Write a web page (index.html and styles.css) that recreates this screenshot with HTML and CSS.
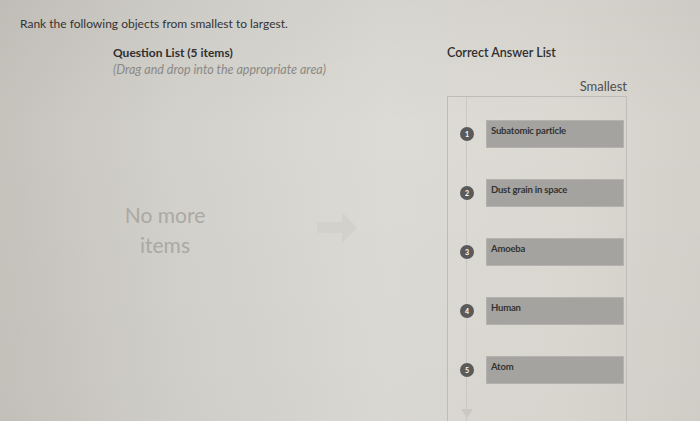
FILE: index.html
```html
<!DOCTYPE html>
<html lang="en">
<head>
<meta charset="utf-8">
<title>Ranking</title>
<link rel="stylesheet" href="styles.css">
</head>
<body>
<main class="page">
  <p class="prompt">Rank the following objects from smallest to largest.</p>
  <div class="columns">
    <section class="source">
      <h2 class="col-title">Question List (5 items)</h2>
      <p class="hint">(Drag and drop into the appropriate area)</p>
      <div class="empty-area">
        <div class="empty-text">No more<br>items</div>
        <svg class="move-arrow" width="40" height="31" viewBox="0 0 40 31" aria-hidden="true">
          <path d="M0 10 H25 V0 L40 15.5 L25 31 V21 H0 Z" fill="#d3d1cb"/>
        </svg>
      </div>
    </section>
    <section class="target">
      <h2 class="col-title">Correct Answer List</h2>
      <div class="end-label">Smallest</div>
      <ol class="track">
        <li class="row"><span class="num">1</span><span class="item">Subatomic particle</span></li>
        <li class="row"><span class="num">2</span><span class="item">Dust grain in space</span></li>
        <li class="row"><span class="num">3</span><span class="item">Amoeba</span></li>
        <li class="row"><span class="num">4</span><span class="item">Human</span></li>
        <li class="row"><span class="num">5</span><span class="item">Atom</span></li>
        <li class="track-end"><span class="down-arrow"></span></li>
      </ol>
    </section>
  </div>
</main>
</body>
</html>
```

FILE: styles.css
```css
html, body {
  margin: 0;
  height: 100%;
  overflow: hidden;
}
body {
  font-family: Lato, "Open Sans", sans-serif;
  color: #2f2f2f;
  background:
    linear-gradient(180deg, rgba(0,0,0,0.03) 0%, rgba(0,0,0,0) 30%, rgba(0,0,0,0.02) 100%),
    linear-gradient(90deg, #c6c3bd 0%, #d3d1cb 25%, #dddbd5 55%, #dcd9d3 80%, #d4d1cb 100%);
}
.page {
  padding: 16px 0 0 20px;
}
.prompt {
  margin: 0;
  font-size: 12px;
  line-height: 16px;
  color: #333;
}
.columns {
  display: flex;
  margin-top: 13px;
}
.source {
  margin-left: 93px;
  width: 334px;
}
.col-title {
  margin: 0;
  font-size: 12px;
  font-weight: 700;
  line-height: 16px;
  color: #2f2f2f;
}
.target .col-title {
  font-size: 12.5px;
  font-weight: 600;
}
.hint {
  margin: 2px 0 0;
  font-size: 12.5px;
  font-style: italic;
  line-height: 14px;
  color: #8a8985;
}
.empty-area {
  display: flex;
  align-items: center;
  margin-top: 123px;
}
.empty-text {
  width: 110px;
  margin-left: -3px;
  text-align: center;
  font-size: 21px;
  line-height: 30px;
  color: #aaa9a4;
}
.move-arrow {
  margin-left: 97px;
  margin-top: -6px;
}
.target {
  width: 180px;
}
.end-label {
  margin-top: 17px;
  text-align: right;
  font-size: 13px;
  line-height: 16px;
  color: #4f4f4f;
}
.track {
  list-style: none;
  margin: 2px 0 0;
  padding: 23px 0 0;
  height: 303px;
  border: 1px solid #bebcb7;
  border-bottom: none;
  background: linear-gradient(90deg, transparent 18px, #cac8c3 18px, #cac8c3 19px, transparent 19px);
  display: flex;
  flex-direction: column;
  gap: 31px;
}
.row {
  display: flex;
  align-items: center;
  gap: 12px;
  padding-left: 12px;
}
.num {
  flex: none;
  width: 14px;
  height: 14px;
  border-radius: 50%;
  background: #5a5a5a;
  color: #fff;
  font-size: 7px;
  font-weight: 700;
  line-height: 14px;
  text-align: center;
}
.item {
  width: 132px;
  height: 22px;
  padding: 4px 0 0 4px;
  background: #a4a3a0;
  border: 1px solid #b3b2ae;
  font-size: 9.5px;
  font-weight: 700;
  line-height: 12px;
  color: #333;
  letter-spacing: -0.2px;
}
.track-end {
  margin-top: -6px;
  padding-left: 13px;
}
.down-arrow {
  display: block;
  width: 0;
  height: 0;
  border-left: 6px solid transparent;
  border-right: 6px solid transparent;
  border-top: 9px solid #cac8c3;
}
```
